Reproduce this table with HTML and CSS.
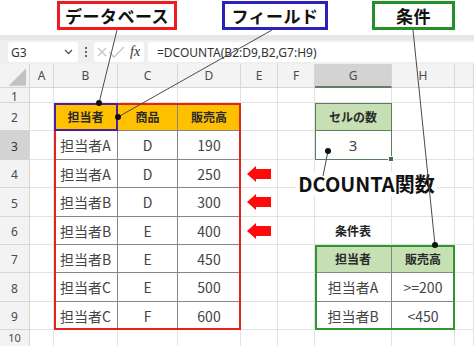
FILE: index.html
```html
<!DOCTYPE html>
<html lang="ja">
<head>
<meta charset="utf-8">
<title>DCOUNTA</title>
<link rel="stylesheet" href="styles.css">
</head>
<body>
<div class="page">
  <div class="titles">
    <div class="tbox tb-red">データベース</div>
    <div class="tbox tb-blue">フィールド</div>
    <div class="tbox tb-green">条件</div>
  </div>

  <div class="fbar">
    <div class="namebox"><span>G3</span>
      <svg class="chev" width="9" height="6" viewBox="0 0 9 6"><path d="M1 1 L4.5 4.5 L8 1" fill="none" stroke="#555" stroke-width="1.3"/></svg>
    </div>
    <div class="vdots"><i></i><i></i><i></i></div>
    <div class="fxbox">
      <svg width="10" height="10" viewBox="0 0 10 10"><path d="M1 1 L9 9 M9 1 L1 9" stroke="#c4c4c4" stroke-width="1.3"/></svg>
      <svg width="17" height="12" viewBox="0 0 17 12"><path d="M1 6 L6 11 L16 1" fill="none" stroke="#c4c4c4" stroke-width="1.3"/></svg>
      <span class="fx">fx</span>
    </div>
    <div class="finput">=DCOUNTA(B2:D9,B2,G7:H9)</div>
  </div>

  <div class="sheet">
    <div class="row r0">
      <div class="corner"><svg width="30" height="24" viewBox="0 0 30 24"><polygon points="27,4 27,22 9,22" fill="#c2c2c2"/></svg></div>
      <div class="ch">A</div><div class="ch">B</div><div class="ch">C</div><div class="ch">D</div><div class="ch">E</div><div class="ch">F</div><div class="ch ch-sel">G</div><div class="ch">H</div><div class="ch"></div>
    </div>
    <div class="row r1">
      <div class="rh">1</div><div></div><div></div><div></div><div></div><div></div><div></div><div></div><div></div><div></div>
    </div>
    <div class="row r2">
      <div class="rh">2</div><div></div>
      <div class="t th">担当者</div><div class="t th">商品</div><div class="t th">販売高</div>
      <div></div><div></div>
      <div class="g gh">セルの数</div><div></div><div></div>
    </div>
    <div class="row r3">
      <div class="rh rh-sel">3</div><div></div>
      <div class="t">担当者A</div><div class="t">D</div><div class="t">190</div>
      <div></div><div></div>
      <div class="g gv">3</div><div></div><div></div>
    </div>
    <div class="row r4">
      <div class="rh">4</div><div></div>
      <div class="t">担当者A</div><div class="t">D</div><div class="t">250</div>
      <div><svg class="arrow" width="24" height="16" viewBox="0 0 24 16"><polygon points="0,8 9,0 9,3 24,3 24,13 9,13 9,16" fill="#ff0a0a"/></svg></div>
      <div></div><div></div><div></div><div></div>
    </div>
    <div class="row r5">
      <div class="rh">5</div><div></div>
      <div class="t">担当者B</div><div class="t">D</div><div class="t">300</div>
      <div><svg class="arrow" width="24" height="16" viewBox="0 0 24 16"><polygon points="0,8 9,0 9,3 24,3 24,13 9,13 9,16" fill="#ff0a0a"/></svg></div>
      <div></div><div></div><div></div><div></div>
    </div>
    <div class="row r6">
      <div class="rh">6</div><div></div>
      <div class="t">担当者B</div><div class="t">E</div><div class="t">400</div>
      <div><svg class="arrow" width="24" height="16" viewBox="0 0 24 16"><polygon points="0,8 9,0 9,3 24,3 24,13 9,13 9,16" fill="#ff0a0a"/></svg></div>
      <div></div><div class="label">条件表</div><div></div><div></div>
    </div>
    <div class="row r7">
      <div class="rh">7</div><div></div>
      <div class="t">担当者B</div><div class="t">E</div><div class="t">450</div>
      <div></div><div></div>
      <div class="t gh">担当者</div><div class="t gh">販売高</div><div></div>
    </div>
    <div class="row r8">
      <div class="rh">8</div><div></div>
      <div class="t">担当者C</div><div class="t">E</div><div class="t">500</div>
      <div></div><div></div>
      <div class="t">担当者A</div><div class="t">&gt;=200</div><div></div>
    </div>
    <div class="row r9">
      <div class="rh">9</div><div></div>
      <div class="t">担当者C</div><div class="t">F</div><div class="t">600</div>
      <div></div><div></div>
      <div class="t">担当者B</div><div class="t">&lt;450</div><div></div>
    </div>
    <div class="row r10">
      <div class="rh rh-last">10</div><div></div><div></div><div></div><div></div><div></div><div></div><div></div><div></div><div></div>
    </div>

    <div class="frame frame-db"></div>
    <div class="frame frame-b2"></div>
    <div class="frame frame-g"></div>
    <div class="frame frame-cond"></div>
    <div class="big">DCOUNTA関数</div>
  </div>

  <svg class="callouts" width="474" height="346" viewBox="0 0 474 346">
    <g stroke="#4a4a4a" stroke-width="1" fill="none">
      <line x1="117" y1="30" x2="99" y2="103"/>
      <line x1="272" y1="30" x2="118" y2="117"/>
      <line x1="413" y1="30" x2="435" y2="245"/>
      <line x1="328" y1="151" x2="323" y2="176"/>
    </g>
    <g fill="#111">
      <circle cx="99" cy="103" r="3"/>
      <circle cx="118" cy="117" r="3"/>
      <circle cx="435" cy="245" r="3"/>
      <circle cx="328" cy="151" r="3"/>
    </g>
  </svg>
</div>
</body>
</html>
```

FILE: styles.css
```css
html, body {
  margin: 0;
  padding: 0;
  background: #ffffff;
}

.page {
  position: relative;
  width: 474px;
  height: 346px;
  overflow: hidden;
  font-family: "Noto Sans", "Noto Sans CJK JP", sans-serif;
  color: #404040;
}

/* title boxes */
.titles {
  height: 35px;
  display: flex;
  align-items: flex-start;
  padding-left: 57px;
  box-sizing: border-box;
  padding-top: 1px;
}

.tbox {
  box-sizing: border-box;
  height: 29px;
  border: 3px solid;
  background: #fff;
  display: flex;
  align-items: center;
  justify-content: center;
  font-family: "Noto Sans CJK JP", sans-serif;
  font-weight: 700;
  font-size: 17px;
  color: #111;
  letter-spacing: 0.5px;
}

.tb-red { width: 120px; border-color: #ee1c1c; }
.tb-blue { width: 106px; border-color: #2a22b8; margin-left: 45px; }
.tb-green { width: 83px; border-color: #23902a; margin-left: 44px; }

/* formula bar */
.fbar {
  height: 29px;
  box-sizing: border-box;
  background: #efefef;
  border-top: 5px solid #e6e6e6;
  display: flex;
  align-items: center;
  padding-left: 8px;
}

.namebox {
  width: 70px;
  height: 20px;
  box-sizing: border-box;
  background: #fff;
  border-radius: 3px;
  display: flex;
  align-items: center;
  justify-content: space-between;
  padding: 0 5px 0 3px;
  font-size: 12px;
  color: #333;
}

.vdots {
  width: 16px;
  display: flex;
  flex-direction: column;
  align-items: center;
  gap: 2px;
}

.vdots i {
  display: block;
  width: 2px;
  height: 2px;
  background: #666;
}

.fxbox {
  width: 50px;
  height: 20px;
  box-sizing: border-box;
  background: #fff;
  border-radius: 3px;
  display: flex;
  align-items: center;
  gap: 1px;
  padding-left: 3px;
}

.fx {
  font-family: "Liberation Serif", serif;
  font-style: italic;
  font-size: 14px;
  color: #333;
  margin-left: 4px;
}

.finput {
  flex: 1;
  height: 20px;
  margin-left: 4px;
  background: #fff;
  display: flex;
  align-items: center;
  padding-left: 9px;
  font-size: 12px;
  color: #333;
  border-radius: 3px 0 0 3px;
}

/* sheet grid */
.sheet {
  display: grid;
  grid-template-columns: 30px 24px 64px 60px 63px 37px 37px 77px 63px 1fr;
  grid-template-rows: 24px 15px 28px 29px 28px 29px 28px 28px 29px 28px 16px;
}

.row { display: contents; }

.row > * {
  box-sizing: border-box;
  border-right: 1px solid #e2e2e2;
  border-bottom: 1px solid #e2e2e2;
  display: flex;
  align-items: center;
  justify-content: center;
  min-width: 0;
}

.row > :nth-child(1) { grid-column: 1; }
.row > :nth-child(2) { grid-column: 2; }
.row > :nth-child(3) { grid-column: 3; }
.row > :nth-child(4) { grid-column: 4; }
.row > :nth-child(5) { grid-column: 5; }
.row > :nth-child(6) { grid-column: 6; }
.row > :nth-child(7) { grid-column: 7; }
.row > :nth-child(8) { grid-column: 8; }
.row > :nth-child(9) { grid-column: 9; }
.row > :nth-child(10) { grid-column: 10; }

.r0 > * { grid-row: 1; }
.r1 > * { grid-row: 2; }
.r2 > * { grid-row: 3; }
.r3 > * { grid-row: 4; }
.r4 > * { grid-row: 5; }
.r5 > * { grid-row: 6; }
.r6 > * { grid-row: 7; }
.r7 > * { grid-row: 8; }
.r8 > * { grid-row: 9; }
.r9 > * { grid-row: 10; }
.r10 > * { grid-row: 11; border-bottom: 0; }

.corner {
  background: #f3f3f3;
  border-right-color: #d6d6d6 !important;
  border-bottom-color: #d6d6d6 !important;
}

.ch, .rh {
  background: #f3f3f3;
  font-size: 12px;
  color: #4a4a4a;
  border-right-color: #d6d6d6 !important;
  border-bottom-color: #d6d6d6 !important;
}

.rh { padding-top: 2px; }

.rh-last {
  padding-top: 0;
  font-size: 11px;
  line-height: 14px;
}

.ch-sel {
  background: #d3d3d3;
  border-bottom: 2px solid #5f7f66 !important;
}

.rh-sel {
  background: #d3d3d3;
  color: #333;
}

.t {
  font-family: "Noto Sans CJK JP", sans-serif;
  font-size: 14px;
  color: #444;
  border-right-color: #858585 !important;
  border-bottom-color: #858585 !important;
}

.th {
  background: #ffc000;
  font-weight: 700;
  font-size: 12px;
  color: #2a2a2a;
}

.gh {
  background: #c6e0b4;
  font-family: "Noto Sans CJK JP", sans-serif;
  font-weight: 700;
  font-size: 12px;
  color: #2a2a2a;
}

.g {
  border-right-color: #5b7d60 !important;
  border-bottom-color: #5b7d60 !important;
}

.gv {
  font-size: 15px;
  color: #444;
}

.label {
  font-family: "Noto Sans CJK JP", sans-serif;
  font-weight: 700;
  font-size: 12px;
  color: #222;
}

/* overlay frames placed on the same grid */
.frame {
  box-sizing: border-box;
  pointer-events: none;
  z-index: 2;
}

.frame-db {
  grid-area: 3 / 3 / 11 / 6;
  border: 2px solid #e5231d;
}

.frame-b2 {
  grid-area: 3 / 3 / 4 / 4;
  border: 2px solid #4c1f9c;
  z-index: 3;
}

.frame-g {
  grid-area: 3 / 8 / 5 / 9;
  border: 1px solid #5b7d60;
  position: relative;
}

.frame-g::after {
  content: "";
  position: absolute;
  right: -3px;
  bottom: -3px;
  width: 4px;
  height: 4px;
  background: #3f6e47;
  border: 1px solid #fff;
}

.frame-cond {
  grid-area: 8 / 8 / 11 / 10;
  border: 2px solid #2f972f;
}

.big {
  grid-area: 5 / 7 / 7 / 10;
  justify-self: center;
  align-self: start;
  margin-top: 12px;
  background: #fff;
  padding: 0 2px;
  font-family: "Noto Sans CJK JP", sans-serif;
  font-weight: 700;
  font-size: 20px;
  line-height: 24px;
  color: #111;
  z-index: 2;
}

.callouts {
  position: absolute;
  left: 0;
  top: 0;
  pointer-events: none;
  z-index: 5;
}
```
